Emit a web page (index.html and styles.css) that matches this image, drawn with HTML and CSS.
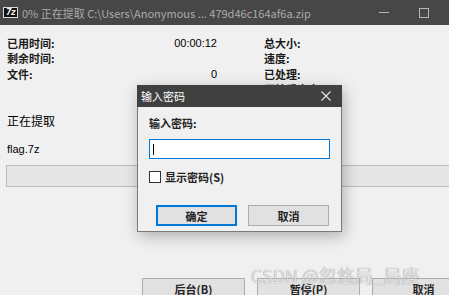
FILE: index.html
```html
<!DOCTYPE html>
<html lang="zh-CN">
<head>
    <meta charset="UTF-8">
    <title>0% 正在提取</title>
    <link rel="stylesheet" href="styles.css">
</head>
<body>
    <div class="window">
        <div class="titlebar">
            <span class="app-icon">7z</span>
            <span class="title">0% 正在提取 C:\Users\Anonymous ... 479d46c164af6a.zip</span>
            <div class="captions">
                <span class="caption-btn"><span class="min-glyph"></span></span>
                <span class="caption-btn"><span class="max-glyph"></span></span>
                <span class="caption-btn"></span>
            </div>
        </div>

        <div class="content">
            <div class="stats">
                <span class="label">已用时间:</span><span class="value">00:00:12</span><span></span><span class="label">总大小:</span>
                <span class="label">剩余时间:</span><span class="value"></span><span></span><span class="label">速度:</span>
                <span class="label">文件:</span><span class="value">0</span><span></span><span class="label">已处理:</span>
                <span class="label"></span><span class="value"></span><span></span><span class="label">压缩后大小:</span>
            </div>
            <div class="status">正在提取</div>
            <div class="filename">flag.7z</div>
            <div class="progress"></div>
            <div class="actions">
                <button class="btn">后台(B)</button>
                <button class="btn">暂停(P)</button>
                <button class="btn">取消</button>
            </div>
        </div>

        <!-- password prompt sits over the progress window -->
        <div class="dialog">
            <div class="dialog-title">
                <span>输入密码</span>
                <svg class="close-x" width="10" height="10" viewBox="0 0 10 10">
                    <path d="M0.5 0.5 L9.5 9.5 M9.5 0.5 L0.5 9.5" stroke="#e8e8e8" stroke-width="1.1" fill="none"/>
                </svg>
            </div>
            <div class="dialog-body">
                <div class="field-label">输入密码:</div>
                <div class="pwd-input"><span class="caret"></span></div>
                <label class="check-row"><span class="checkbox"></span>显示密码(S)</label>
                <div class="dialog-actions">
                    <button class="dbtn default">确定</button>
                    <button class="dbtn">取消</button>
                </div>
            </div>
        </div>

        <div class="watermark">CSDN @忽悠局_局座</div>
    </div>
</body>
</html>
```

FILE: styles.css
```css
html, body {
    margin: 0;
    overflow: hidden;
}
body {
    width: 449px;
    height: 295px;
    background: #f0f0f0;
    font-family: "Liberation Sans", "Noto Sans CJK SC", sans-serif;
    font-size: 11px;
    color: #000;
}
.window {
    position: relative;
    width: 500px;
    height: 295px;
    background: #f0f0f0;
}
.titlebar {
    height: 25px;
    background: #474747;
    display: flex;
    align-items: center;
    color: #aaa;
    font-size: 11px;
}
.app-icon {
    box-sizing: border-box;
    width: 15px;
    height: 11px;
    margin: 0 4px 0 3px;
    border: 1px solid #d8d8d8;
    background: #111;
    color: #eee;
    font: bold 8px/9px "DejaVu Sans", sans-serif;
    font-style: italic;
    text-align: center;
    letter-spacing: -0.5px;
}
.title {
    flex: 1;
    white-space: nowrap;
    font-family: "Noto Sans CJK SC", "Liberation Sans", sans-serif;
}
.captions {
    display: flex;
    margin-right: 16px;
}
.caption-btn {
    width: 40px;
    height: 25px;
    display: flex;
    align-items: center;
    justify-content: center;
}
.min-glyph {
    width: 10px;
    height: 1px;
    background: #b8b8b8;
}
.max-glyph {
    box-sizing: border-box;
    width: 10px;
    height: 10px;
    border: 1px solid #b8b8b8;
}

.content {
    padding: 10px 0 0 7px;
}
.stats {
    display: grid;
    grid-template-columns: 150px 60px 47px 1fr;
    grid-auto-rows: 15.5px;
    align-items: center;
}
.label {
    font-family: "Noto Sans CJK SC", sans-serif;
    font-weight: 700;
    font-size: 11px;
    color: #1a1a1a;
}
.value {
    text-align: right;
    font-size: 11px;
}
.status {
    margin-top: 16px;
    font-family: "Noto Sans CJK SC", sans-serif;
    font-size: 12px;
    line-height: 15px;
}
.filename {
    margin-top: 14px;
    font-size: 11px;
    line-height: 15px;
}
.progress {
    margin: 8px 0 0 -1px;
    height: 20px;
    background: #e6e6e6;
    border: 1px solid #bcbcbc;
}
.actions {
    display: flex;
    gap: 12px;
    margin: 91px 0 0 135px;
}
.btn {
    width: 103px;
    height: 22px;
    padding: 0;
    background: #e1e1e1;
    border: 1px solid #adadad;
    font-family: "Noto Sans CJK SC", sans-serif;
    font-weight: 700;
    font-size: 11px;
    color: #222;
}

.dialog {
    position: absolute;
    left: 137px;
    top: 85px;
    width: 205px;
    height: 147px;
    box-sizing: border-box;
    border: 1px solid #7a7a7a;
    border-top: none;
    background: #f0f0f0;
    box-shadow: 2px 4px 14px rgba(0, 0, 0, 0.28);
}
.dialog-title {
    height: 22px;
    margin: 0 -1px;
    background: #404040;
    display: flex;
    align-items: center;
    justify-content: space-between;
    padding: 0 11px 0 4px;
    color: #fff;
    font-family: "Noto Sans CJK SC", sans-serif;
    font-size: 11px;
}
.dialog-body {
    padding: 9px 11px 0 11px;
}
.field-label {
    font-family: "Noto Sans CJK SC", sans-serif;
    font-weight: 700;
    font-size: 11px;
    line-height: 14px;
    color: #222;
}
.pwd-input {
    margin-top: 9px;
    height: 20px;
    box-sizing: border-box;
    background: #fff;
    border: 1px solid #0078d7;
    display: flex;
    align-items: center;
    padding-left: 3px;
}
.caret {
    width: 1px;
    height: 11px;
    background: #000;
}
.check-row {
    display: flex;
    align-items: center;
    gap: 4px;
    margin-top: 10px;
    font-family: "Noto Sans CJK SC", sans-serif;
    font-weight: 700;
    font-size: 11px;
    color: #222;
}
.checkbox {
    box-sizing: border-box;
    width: 12px;
    height: 12px;
    background: #fff;
    border: 1px solid #333;
}
.dialog-actions {
    display: flex;
    justify-content: space-between;
    margin: 20px 1px 0 7px;
}
.dbtn {
    width: 81px;
    height: 21px;
    padding: 0;
    background: #e1e1e1;
    border: 1px solid #adadad;
    font-family: "Noto Sans CJK SC", sans-serif;
    font-weight: 700;
    font-size: 11px;
    color: #222;
}
.dbtn.default {
    border: 2px solid #0078d7;
}

.watermark {
    position: absolute;
    left: 251px;
    top: 262px;
    font-family: "Noto Sans CJK SC", "Liberation Sans", sans-serif;
    font-weight: 300;
    font-size: 18px;
    color: #ececec;
    text-shadow: 0 0 1px #8a8a8a, 0 0 1px #aaa;
    white-space: nowrap;
    letter-spacing: 0.2px;
}
```
